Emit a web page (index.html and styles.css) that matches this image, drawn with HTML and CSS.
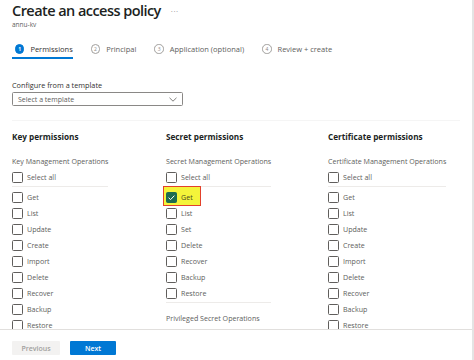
FILE: index.html
```html
<!DOCTYPE html>
<html lang="en">
<head>
    <meta charset="UTF-8">
    <title>Create an access policy</title>
    <link rel="stylesheet" href="styles.css">
</head>
<body>
    <div class="page">
        <div class="content">
            <div class="title-row">
                <h1>Create an access policy</h1>
                <span class="more">&middot;&middot;&middot;</span>
            </div>
            <div class="subtitle">annu-kv</div>

            <div class="steps">
                <div class="step active"><span class="num">1</span>Permissions</div>
                <div class="step"><span class="num">2</span>Principal</div>
                <div class="step"><span class="num">3</span>Application (optional)</div>
                <div class="step"><span class="num">4</span>Review + create</div>
            </div>

            <div class="template">
                <label>Configure from a template</label>
                <div class="dropdown">
                    <span>Select a template</span>
                    <svg width="8" height="5" viewBox="0 0 8 5"><path d="M0.5 0.8 L4 4.2 L7.5 0.8" fill="none" stroke="#605e5c" stroke-width="0.8"/></svg>
                </div>
            </div>

            <div class="columns">
                <div class="col">
                    <h2>Key permissions</h2>
                    <div class="ops">Key Management Operations</div>
                    <div class="row"><span class="box"></span>Select all</div>
                    <div class="sep"></div>
                    <div class="row"><span class="box"></span>Get</div>
                    <div class="row"><span class="box"></span>List</div>
                    <div class="row"><span class="box"></span>Update</div>
                    <div class="row"><span class="box"></span>Create</div>
                    <div class="row"><span class="box"></span>Import</div>
                    <div class="row"><span class="box"></span>Delete</div>
                    <div class="row"><span class="box"></span>Recover</div>
                    <div class="row"><span class="box"></span>Backup</div>
                    <div class="row"><span class="box"></span>Restore</div>
                </div>
                <div class="col">
                    <h2>Secret permissions</h2>
                    <div class="ops">Secret Management Operations</div>
                    <div class="row"><span class="box"></span>Select all</div>
                    <div class="sep"></div>
                    <div class="row marked">
                        <span class="box checked"><svg width="11" height="11" viewBox="0 0 11 11"><path d="M2.6 5.7 L4.6 7.6 L8.4 3.6" fill="none" stroke="#fff" stroke-width="1"/></svg></span>Get
                    </div>
                    <div class="row"><span class="box"></span>List</div>
                    <div class="row"><span class="box"></span>Set</div>
                    <div class="row"><span class="box"></span>Delete</div>
                    <div class="row"><span class="box"></span>Recover</div>
                    <div class="row"><span class="box"></span>Backup</div>
                    <div class="row"><span class="box"></span>Restore</div>
                    <div class="sep wide"></div>
                    <div class="ops priv">Privileged Secret Operations</div>
                    <div class="row"><span class="box"></span></div>
                </div>
                <div class="col">
                    <h2>Certificate permissions</h2>
                    <div class="ops">Certificate Management Operations</div>
                    <div class="row"><span class="box"></span>Select all</div>
                    <div class="sep"></div>
                    <div class="row"><span class="box"></span>Get</div>
                    <div class="row"><span class="box"></span>List</div>
                    <div class="row"><span class="box"></span>Update</div>
                    <div class="row"><span class="box"></span>Create</div>
                    <div class="row"><span class="box"></span>Import</div>
                    <div class="row"><span class="box"></span>Delete</div>
                    <div class="row"><span class="box"></span>Recover</div>
                    <div class="row"><span class="box"></span>Backup</div>
                    <div class="row"><span class="box"></span>Restore</div>
                </div>
            </div>
        </div>

        <div class="footer">
            <button class="btn prev" disabled>Previous</button>
            <button class="btn next">Next</button>
        </div>
    </div>
</body>
</html>
```
FILE: styles.css
```css
body {
    margin: 0;
    background-color: #fff;
    font-family: "Open Sans", Arial, sans-serif;
    color: #323130;
}
.page {
    width: 472px;
    height: 360px;
    border-right: 2px solid #e4e4e4;
    display: flex;
    flex-direction: column;
    overflow: hidden;
}
.content {
    flex: 1;
    overflow: hidden;
    padding: 0 12px;
}
.title-row {
    display: flex;
    align-items: center;
    height: 21px;
}
h1 {
    margin: 0;
    font-size: 14.5px;
    font-weight: 600;
    letter-spacing: -0.55px;
    color: #201f1e;
}
.more {
    margin-left: 10px;
    font-size: 8px;
    color: #8a8886;
    letter-spacing: 0.5px;
}
.subtitle {
    font-size: 6.5px;
    line-height: 8px;
    color: #605e5c;
}
.steps {
    display: flex;
    gap: 18px;
    margin-top: 12px;
    height: 18px;
}
.step {
    display: flex;
    align-items: center;
    gap: 6px;
    height: 16px;
    font-size: 7.5px;
    color: #605e5c;
}
.step .num {
    width: 7.4px;
    height: 7.4px;
    border: 0.8px solid #a19f9d;
    border-radius: 50%;
    font-size: 5px;
    display: flex;
    align-items: center;
    justify-content: center;
    color: #8a8886;
}
.step.active {
    color: #323130;
    border-bottom: 2px solid #0078d4;
    padding-left: 3px;
}
.step.active .num {
    background-color: #0078d4;
    border-color: #0078d4;
    color: #fff;
    font-weight: 700;
}
.template {
    margin-top: 20px;
}
.template label {
    display: block;
    font-size: 7.3px;
    line-height: 12px;
    color: #323130;
}
.dropdown {
    width: 159px;
    height: 12px;
    border: 1px solid #8a8886;
    border-radius: 1.5px;
    display: flex;
    align-items: center;
    justify-content: space-between;
    padding: 0 5px 0 5px;
    font-size: 7px;
    color: #605e5c;
    margin-top: 1px;
}
.columns {
    display: grid;
    grid-template-columns: 154px 162px 1fr;
    justify-items: start;
    margin-top: 14px;
    border-top: 1px solid #f5f5f5;
    padding-top: 9px;
}
.col {
    display: flex;
    flex-direction: column;
}
h2 {
    margin: 0;
    font-size: 8.2px;
    font-weight: 700;
    line-height: 14px;
    color: #201f1e;
}
.ops {
    font-size: 7.1px;
    line-height: 16px;
    color: #605e5c;
    margin-top: 9px;
}
.ops.priv {
    margin-top: 0;
}
.row {
    display: flex;
    align-items: center;
    gap: 4px;
    height: 16px;
    font-size: 7.1px;
    color: #605e5c;
    position: relative;
    z-index: 0;
}
.box {
    width: 9px;
    height: 9px;
    border: 1px solid #605e5c;
    border-radius: 1.5px;
    display: flex;
}
.box.checked {
    background-color: #1d6b4f;
    border-color: #1d6b4f;
}
.box.checked svg {
    margin: -1px;
}
.row.marked {
    color: #4a4a20;
}
.row.marked::before {
    content: "";
    position: absolute;
    left: -3px;
    top: -3px;
    width: 36px;
    height: 18px;
    background-color: #f4f43a;
    border: 1.5px solid #e2412c;
    z-index: -1;
}
.sep {
    height: 1px;
    background-color: #edebe9;
    margin: 1px 0 2px;
}
.sep.wide {
    margin: 1px 0 7px;
}
.footer {
    height: 31px;
    border-top: 1px solid #e1dfdd;
    display: flex;
    align-items: flex-start;
    gap: 10px;
    padding: 11px 12px 0;
    box-sizing: border-box;
}
.btn {
    height: 14px;
    border: none;
    border-radius: 1px;
    font-family: "Open Sans", Arial, sans-serif;
    font-size: 7px;
    font-weight: 600;
    padding: 0;
}
.prev {
    width: 48px;
    background-color: #f3f2f1;
    color: #a19f9d;
}
.next {
    width: 46px;
    background-color: #0078d4;
    color: #fff;
}
```
